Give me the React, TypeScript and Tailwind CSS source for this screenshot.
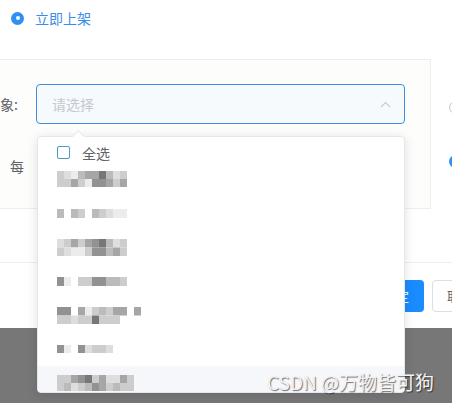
import React from "react";

// Mosaic shades for the blurred option labels
const shade: Record<string, string> = {
  a: "#ececec",
  b: "#dedede",
  c: "#cdcdcd",
  d: "#bbbbbb",
  e: "#a6a6a6",
  f: "#929292",
  g: "#777777",
};

interface Option {
  rows: string[];
  cellH: number;
  hover?: boolean;
}

const options: Option[] = [
  { rows: ["cbadeegdbc", "ccecaffece"], cellH: 8 },
  { rows: ["d.dc.dcbaa"], cellH: 9 },
  { rows: ["bcecefgdbc", "cbaacffdec"], cellH: 8.5 },
  { rows: ["fa.ccffddc"], cellH: 9 },
  { rows: ["ff.eacdcee.e", "ccbccgccc..."], cellH: 8.5 },
  { rows: ["fa.fbccb"], cellH: 8 },
  { rows: ["ccefgcebbec", "cdbcdfecdcc"], cellH: 8, hover: true },
];

function Mosaic({ rows, cellH }: { rows: string[]; cellH: number }) {
  const w = Math.max(...rows.map((r) => r.length)) * 7;
  const h = rows.length * cellH;
  return (
    <svg width={w} height={h} viewBox={`0 0 ${w} ${h}`} className="block">
      {rows.map((row, ri) =>
        row.split("").map((ch, ci) =>
          shade[ch] ? (
            <rect key={`${ri}-${ci}`} x={ci * 7} y={ri * cellH} width={7} height={cellH} fill={shade[ch]} />
          ) : null
        )
      )}
    </svg>
  );
}

export default function App() {
  return (
    <div className="relative w-[452px] h-[403px] overflow-hidden bg-white flex flex-col font-['Noto_Sans_CJK_SC','Liberation_Sans',sans-serif]">
      {/* Radio row */}
      <div className="h-[59px] shrink-0 pl-[11px] pt-[11px]">
        <label className="flex items-center gap-[11px] h-[14px]">
          <span className="w-[13px] h-[13px] rounded-full bg-[#2f90f3] flex items-center justify-center">
            <span className="w-[4px] h-[4px] rounded-full bg-white" />
          </span>
          <span className="text-[14px] leading-[14px] text-[#3a8ee6]">立即上架</span>
        </label>
      </div>

      {/* Card */}
      <div className="w-[431px] h-[150px] shrink-0 border-y border-r border-[#ebeef5] bg-[#fdfdfc] flex flex-col">
        <div className="mt-[24px] flex items-center h-[40px]">
          <span className="w-[36px] text-[14px] text-[#606266] leading-none">象:</span>
          <div className="w-[369px] h-[40px] rounded-[4px] border border-[#3d8fde] bg-[#f6fafd] flex items-center justify-between pl-[15px] pr-[13px]">
            <span className="text-[14px] text-[#c4c9d2]">请选择</span>
            <svg width="11" height="7" viewBox="0 0 11 7" fill="none">
              <polyline points="1,6 5.5,1.5 10,6" stroke="#c9ccd2" strokeWidth="1.2" />
            </svg>
          </div>
        </div>
        <div className="mt-[32px] pl-[10px] text-[14px] leading-[20px] text-[#606266]">每</div>
      </div>

      <div className="h-[53px] shrink-0" />

      {/* Footer */}
      <div className="h-[66px] shrink-0 border-t border-[#ebeef5] flex items-start justify-end pt-[17px] -mr-[36px] gap-[8px]">
        <button className="w-[56px] h-[32px] rounded-[4px] bg-[#1a8cff] text-white text-[13px]">确定</button>
        <button className="w-[56px] h-[32px] rounded-[4px] border border-[#dcdfe6] bg-white text-[#606266] text-[13px]">取消</button>
      </div>

      {/* Modal mask */}
      <div className="flex-1 bg-[#777777]" />

      {/* Partially visible controls on the right */}
      <span className="absolute left-[449px] top-[101px] w-[13px] h-[13px] rounded-full border border-[#c0c4cc] bg-white" />
      <span className="absolute left-[449px] top-[155px] w-[13px] h-[13px] rounded-full bg-[#2f90f3]" />

      {/* Dropdown */}
      <div className="absolute left-[37px] top-[136px] w-[368px] h-[257px] rounded-[4px] border border-[#e4e7ed] bg-white shadow-[0_2px_12px_rgba(0,0,0,0.12)]">
        <span className="absolute left-[36px] -top-[5px] w-[9px] h-[9px] rotate-45 bg-white border-l border-t border-[#e4e7ed]" />
        <div className="relative h-full overflow-hidden rounded-[4px]">
          <div className="h-[25px] flex items-start pt-[9px] pl-[19px] gap-[12px]">
            <span className="w-[13px] h-[13px] rounded-[2px] border border-[#4a9ac4] bg-white" />
            <span className="text-[14px] leading-[14px] text-[#606266]">全选</span>
          </div>
          {options.map((o, i) => (
            <div key={i} className={`h-[34px] flex items-center pl-[19px] ${o.hover ? "bg-[#f5f7fa]" : ""}`}>
              <Mosaic rows={o.rows} cellH={o.cellH} />
            </div>
          ))}
        </div>
      </div>

      {/* Watermark */}
      <span className="absolute left-[267px] top-[370px] text-[19px] leading-[24px] text-[#f3f3f3] whitespace-nowrap [text-shadow:1px_1px_1px_rgba(0,0,0,0.55)]">
        CSDN @万物皆可狗
      </span>
    </div>
  );
}
